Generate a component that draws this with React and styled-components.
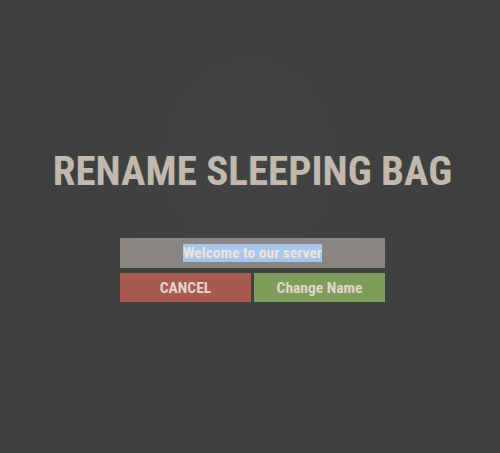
import React from "react"
import styled, {createGlobalStyle} from "styled-components"

const Global = createGlobalStyle`
  html, body {
    margin: 0;
    padding: 0;
    height: 100%;
  }
  body {
    background: #3e3f3f;
    font-family: "Roboto Condensed", Roboto, "Liberation Sans", sans-serif;
  }
`

const App = () => {
  return (
    <>
      <Global/>
      <Screen>
        <Title>RENAME SLEEPING BAG</Title>
        <Form>
          <NameField>
            <Selected>Welcome to our server</Selected>
          </NameField>
          <Actions>
            <Button tone="cancel">CANCEL</Button>
            <Button tone="confirm">Change Name</Button>
          </Actions>
        </Form>
      </Screen>
    </>
  )
}

const Screen = styled.div`
  width: 500px;
  height: 453px;
  box-sizing: border-box;
  padding: 147px 0 0 5px;
  display: flex;
  flex-direction: column;
  align-items: center;
  background:
    radial-gradient(ellipse at 50% 35%, rgba(68, 70, 70, 0.7) 0%, rgba(62, 63, 63, 0) 70%),
    #3d3e3e;
`

const Title = styled.h1`
  margin: 0 0 43px 0;
  font-size: 41px;
  font-weight: 700;
  font-stretch: condensed;
  line-height: 48px;
  color: #c2b8ad;
  white-space: nowrap;
`

const Form = styled.div`
  width: 265px;
  display: flex;
  flex-direction: column;
  gap: 5px;
`

const NameField = styled.div`
  height: 30px;
  background: #898580;
  display: flex;
  align-items: center;
  justify-content: center;
  font-size: 15.5px;
  font-weight: 700;
  font-stretch: condensed;
  color: #ece4dc;
`

const Selected = styled.span`
  background: #a7c6ec;
  line-height: 18px;
`

const Actions = styled.div`
  display: grid;
  grid-template-columns: 1fr 1fr;
  gap: 3px;
`

const Button = styled.button`
  height: 29px;
  border: none;
  padding: 0;
  font-family: inherit;
  font-size: 15.5px;
  font-weight: 700;
  font-stretch: condensed;
  color: #e3d4c8;
  background: ${p => p.tone === "cancel" ? "#a85a4e" : "#7e9d5a"};
`

export default App
